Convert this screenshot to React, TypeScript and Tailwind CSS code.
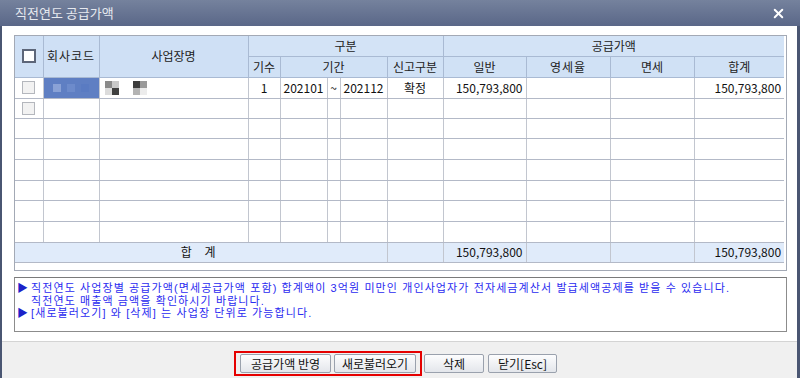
import { X } from "lucide-react";

const KR = { fontFamily: '"Noto Sans CJK KR", "Noto Sans", sans-serif' };
const NOTE = { fontFamily: '"Liberation Sans", "Noto Sans CJK KR", sans-serif' };

const th = "border border-[#a9bad3] font-normal text-[12px] text-[#222] p-0";
const td = "border-x border-x-[#c2c6cf] border-y border-y-[#b3b9c7] text-[12px] text-[#111] p-0";

function HeadBox() {
    return <div className="mx-auto w-[14px] h-[14px] border-2 border-[#5d6679] bg-white" />;
}

function RowBox() {
    return <div className="mx-auto w-[13px] h-[13px] border border-[#b4b7bd] bg-[#f2f2f2]" />;
}

function Btn({ label, w }: { label: string; w: string }) {
    return (
        <button className={`${w} h-[19px] rounded-[2px] border border-[#9aa1ad] bg-gradient-to-b from-[#fdfdfe] to-[#e3e6eb] text-[12px] text-[#111] leading-none`}>
            {label}
        </button>
    );
}

export default function App() {
    const blanks = [0, 1, 2, 3, 4, 5];
    return (
        <div style={KR} className="w-[800px] h-[378px] flex flex-col bg-[#4a5672] overflow-hidden">
            {/* title bar */}
            <div className="h-[26px] shrink-0 flex items-center justify-between pl-[15px] pr-[14px] bg-gradient-to-b from-[#75829d] to-[#5a6788]">
                <span className="text-[13px] text-[#e6e9ef]">직전연도 공급가액</span>
                <X size={15} strokeWidth={3.2} className="text-white" />
            </div>

            <div className="flex-1 flex flex-col mx-[2px] mr-[3px] bg-white">
                {/* body */}
                <div className="h-[315px] shrink-0 flex flex-col pl-[12px] pt-[9px]">
                    <div className="w-[773px] h-[236px] border border-[#a3a9b5] bg-white">
                        <table className="table-fixed border-collapse w-[769px]">
                            <colgroup>
                                <col className="w-[28px]" />
                                <col className="w-[56px]" />
                                <col className="w-[149px]" />
                                <col className="w-[32px]" />
                                <col className="w-[47px]" />
                                <col className="w-[13px]" />
                                <col className="w-[47px]" />
                                <col className="w-[56px]" />
                                <col className="w-[83px]" />
                                <col className="w-[84px]" />
                                <col className="w-[84px]" />
                                <col className="w-[90px]" />
                            </colgroup>
                            <thead>
                                <tr className="h-[20px]">
                                    <th rowSpan={2} className={`${th} border-t-0 border-l-0 bg-[#cfe0f5]`}><HeadBox /></th>
                                    <th rowSpan={2} className={`${th} border-t-0 bg-[#cfe0f5] tracking-[1px]`}>회사코드</th>
                                    <th rowSpan={2} className={`${th} border-t-0 bg-[#cfe0f5]`}>사업장명</th>
                                    <th colSpan={5} className={`${th} border-t-0 bg-[#d3e3f6]`}>구분</th>
                                    <th colSpan={4} className={`${th} border-t-0 border-r-0 bg-[#d3e3f6]`}>공급가액</th>
                                </tr>
                                <tr className="h-[21px]">
                                    <th className={`${th} bg-[#d0e1f5]`}>기수</th>
                                    <th colSpan={3} className={`${th} bg-[#d0e1f5]`}>기간</th>
                                    <th className={`${th} bg-[#d0e1f5]`}>신고구분</th>
                                    <th className={`${th} bg-[#d0e1f5]`}>일반</th>
                                    <th className={`${th} bg-[#d0e1f5] tracking-[1px]`}>영세율</th>
                                    <th className={`${th} bg-[#d0e1f5]`}>면세</th>
                                    <th className={`${th} border-r-0 bg-[#d0e1f5]`}>합계</th>
                                </tr>
                            </thead>
                            <tbody>
                                <tr className="h-[21px]">
                                    <td className={`${td} border-l-0`}><RowBox /></td>
                                    <td className={`${td} bg-[#5f7fc3]`}>
                                        <div className="flex items-center justify-center gap-[6px]">
                                            <div className="w-[8px] h-[8px] bg-[#8aa2d6]" />
                                            <div className="w-[8px] h-[8px] bg-[#6d8bcb]" />
                                            <div className="w-[8px] h-[8px] bg-[#5a7bc2]" />
                                        </div>
                                    </td>
                                    <td className={td}>
                                        <div className="flex items-center gap-[3px] pl-[5px]">
                                            <div className="grid grid-cols-2">
                                                <div className="w-[7px] h-[7px] bg-[#8a8a8a]" />
                                                <div className="w-[7px] h-[7px] bg-[#c9c9c9]" />
                                                <div className="w-[7px] h-[7px] bg-[#dcdcdc]" />
                                                <div className="w-[7px] h-[7px] bg-[#404040]" />
                                            </div>
                                            <div className="w-[8px]" />
                                            <div className="grid grid-cols-2">
                                                <div className="w-[7px] h-[7px] bg-[#3c3c3c]" />
                                                <div className="w-[7px] h-[7px] bg-[#9a9a9a]" />
                                                <div className="w-[7px] h-[7px] bg-[#b3b3b3]" />
                                                <div className="w-[7px] h-[7px] bg-[#ececec]" />
                                            </div>
                                        </div>
                                    </td>
                                    <td className={`${td} text-center`}>1</td>
                                    <td className={`${td} text-center`}>202101</td>
                                    <td className={`${td} text-center text-[10px]`}>~</td>
                                    <td className={`${td} text-center`}>202112</td>
                                    <td className={`${td} text-center`}>확정</td>
                                    <td className={`${td} text-right pr-[3px]`}>150,793,800</td>
                                    <td className={td} />
                                    <td className={td} />
                                    <td className={`${td} border-r-0 text-right pr-[3px]`}>150,793,800</td>
                                </tr>
                                <tr className="h-[20px]">
                                    <td className={`${td} border-l-0`}><RowBox /></td>
                                    {Array.from({ length: 11 }).map((_, i) => (
                                        <td key={i} className={`${td} ${i === 10 ? "border-r-0" : ""}`} />
                                    ))}
                                </tr>
                                {blanks.map((r) => (
                                    <tr key={r} className="h-[20.7px]">
                                        {Array.from({ length: 12 }).map((_, i) => (
                                            <td key={i} className={`${td} ${i === 0 ? "border-l-0" : ""} ${i === 11 ? "border-r-0" : ""}`} />
                                        ))}
                                    </tr>
                                ))}
                                <tr className="h-[20px] bg-[#e0ebfa]">
                                    <td colSpan={7} className={`${td} border-l-0 text-center tracking-[5px]`}>합 계</td>
                                    <td className={td} />
                                    <td className={`${td} text-right pr-[3px]`}>150,793,800</td>
                                    <td className={td} />
                                    <td className={td} />
                                    <td className={`${td} border-r-0 text-right pr-[3px]`}>150,793,800</td>
                                </tr>
                            </tbody>
                        </table>
                    </div>

                    {/* notes */}
                    <div style={NOTE} className="mt-[6px] w-[773px] h-[55px] border border-[#8c8c8c] border-t-[#7a7a7a] pl-[2px] pt-[4px] text-[11px] leading-[12.5px] tracking-[1.1px] text-[#2b2bf0]">
                        <div className="flex h-[12.5px] items-center">
                            <span className="w-[14px] text-[#1c22c8] text-[11px] tracking-normal">▶</span>
                            <span>직전연도 사업장별 공급가액(면세공급가액 포함) 합계액이 3억원 미만인 개인사업자가 전자세금계산서 발급세액공제를 받을 수 있습니다.</span>
                        </div>
                        <div className="flex h-[12.5px] items-center">
                            <span className="w-[14px]" />
                            <span>직전연도 매출액 금액을 확인하시기 바랍니다.</span>
                        </div>
                        <div className="flex h-[12.5px] items-center">
                            <span className="w-[14px] text-[#1c22c8] text-[11px] tracking-normal">▶</span>
                            <span>[새로불러오기] 와 [삭제] 는 사업장 단위로 가능합니다.</span>
                        </div>
                    </div>
                </div>

                {/* footer */}
                <div className="flex-1 border-t border-[#d4d4d4] bg-[#f0f0f0] flex items-start justify-center pt-[9px] pr-[8px]">
                    <div className="flex items-center gap-[3px] border-2 border-[#e50000] px-[4px] py-[1px]">
                        <Btn label="공급가액 반영" w="w-[91px]" />
                        <Btn label="새로불러오기" w="w-[82px]" />
                    </div>
                    <div className="flex items-center gap-[4px] ml-[2px] mt-[3px]">
                        <Btn label="삭제" w="w-[60px]" />
                        <Btn label="닫기[Esc]" w="w-[69px]" />
                    </div>
                </div>
            </div>
        </div>
    );
}
